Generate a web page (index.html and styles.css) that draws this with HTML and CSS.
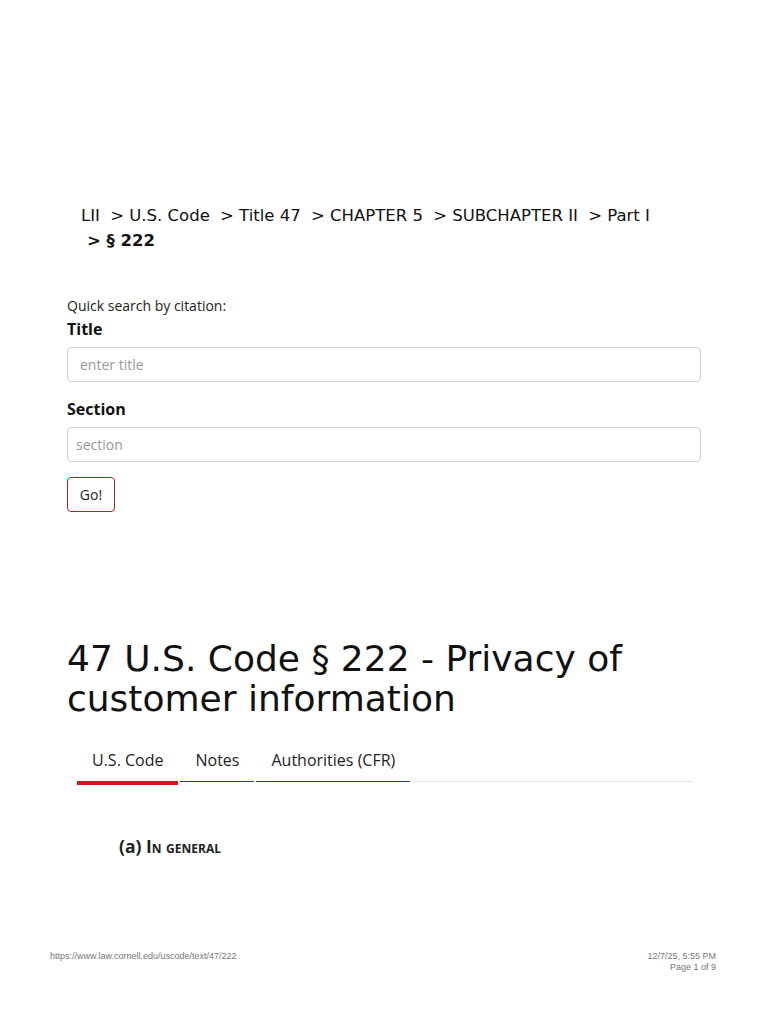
FILE: index.html
```html
<!DOCTYPE html>
<html>
<head>
<meta charset="utf-8">
<link rel="stylesheet" href="styles.css">
</head>
<body>
<div class="page">
  <nav class="crumbs">
    <span class="crumb">LII</span>
    <span class="crumb">&gt; U.S. Code</span>
    <span class="crumb">&gt; Title 47</span>
    <span class="crumb">&gt; CHAPTER 5</span>
    <span class="crumb">&gt; SUBCHAPTER II</span>
    <span class="crumb">&gt; Part I</span>
    <div class="crumb-last">&gt; § 222</div>
  </nav>

  <form class="search">
    <div class="search-intro">Quick search by citation:</div>
    <label class="field-label">Title</label>
    <div class="input"><span class="ph">enter title</span></div>
    <label class="field-label">Section</label>
    <div class="input input-section"><span class="ph">section</span></div>
    <div class="btn">Go!</div>
  </form>

  <h1 class="title">47 U.S. Code § 222 - Privacy of customer information</h1>

  <div class="tabs">
    <div class="tab active">U.S. Code</div>
    <div class="tab">Notes</div>
    <div class="tab">Authorities (CFR)</div>
    <div class="tab-rest"></div>
  </div>

  <div class="sub">(a) <span class="sc">In general</span></div>
</div>

<footer class="pfoot">
  <div class="url">https://www.law.cornell.edu/uscode/text/47/222</div>
  <div class="meta">12/7/25, 5:55 PM<br>Page 1 of 9</div>
</footer>
</body>
</html>
```

FILE: styles.css
```css
html, body {
  margin: 0;
  padding: 0;
  background: #fff;
}
body {
  width: 768px;
  height: 1024px;
  position: relative;
  color: #111;
  font-family: "Open Sans", "Noto Sans", sans-serif;
}
.page {
  padding: 203px 67px 0 67px;
}
.crumbs {
  font-family: "DejaVu Sans", sans-serif;
  font-size: 16.5px;
  line-height: 25px;
  padding-left: 14px;
  color: #111;
}
.crumb {
  margin-right: 5px;
}
.crumb-last {
  font-weight: bold;
  padding-left: 6px;
}
.search {
  margin-top: 42px;
}
.search-intro {
  font-size: 14px;
  line-height: 22px;
  color: #222;
}
.field-label {
  display: block;
  font-weight: 700;
  font-size: 16px;
  line-height: 24px;
}
.input {
  box-sizing: border-box;
  width: 634px;
  height: 35px;
  border: 1px solid #d0d0d0;
  border-radius: 4px;
  padding: 0 12px;
  display: flex;
  align-items: center;
  margin: 6px 0 15px;
}
.input-section {
  padding: 0 8px;
}
.ph {
  font-size: 14px;
  color: #999;
}
.btn {
  box-sizing: border-box;
  width: 48px;
  height: 35px;
  border: 1px solid #b22222;
  border-radius: 4px;
  display: flex;
  align-items: center;
  justify-content: center;
  font-size: 14px;
  color: #222;
}
.title {
  font-family: "DejaVu Sans", sans-serif;
  font-weight: normal;
  font-size: 36px;
  line-height: 40px;
  margin: 127px 0 0 0;
  color: #111;
}
.tabs {
  display: flex;
  align-items: flex-start;
  margin-top: 30px;
  padding-left: 10px;
  width: 616px;
}
.tab {
  font-size: 16px;
  line-height: 22px;
  padding: 0 15px 10px;
  border-bottom: 1px solid #2a3f8f;
  margin-right: 2px;
  color: #222;
}
.tab.active {
  border-bottom: 4px solid #c01f1f;
}
.tab-rest {
  flex: 1;
  height: 32px;
  border-bottom: 1px solid #e6e6e6;
}
.sub {
  margin: 49px 0 0 52px;
  font-weight: 700;
  font-size: 17.5px;
  color: #222;
}
.sc {
  font-variant: small-caps;
}
.pfoot {
  position: absolute;
  left: 50px;
  right: 52px;
  top: 951px;
  display: flex;
  justify-content: space-between;
  font-family: "Liberation Sans", Arial, sans-serif;
  font-size: 9px;
  line-height: 11px;
  color: #777;
}
.meta {
  text-align: right;
}
```
